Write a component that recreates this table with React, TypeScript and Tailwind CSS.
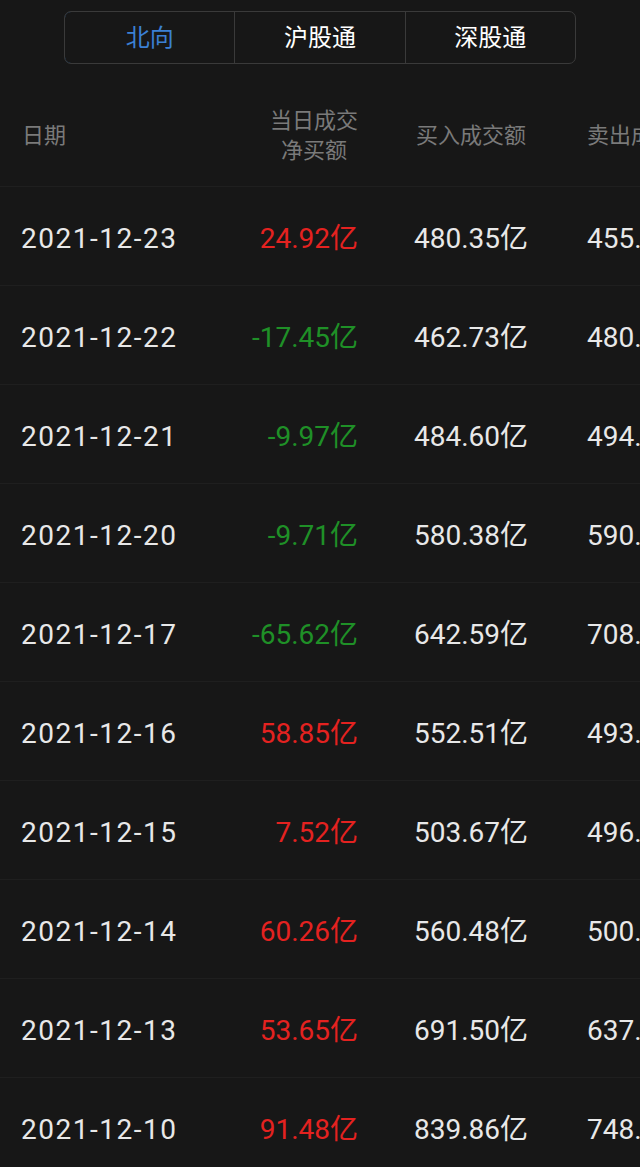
import React from "react";

const rows = [
  { date: "2021-12-23", net: "24.92亿", up: true, buy: "480.35亿", sell: "455.43亿" },
  { date: "2021-12-22", net: "-17.45亿", up: false, buy: "462.73亿", sell: "480.18亿" },
  { date: "2021-12-21", net: "-9.97亿", up: false, buy: "484.60亿", sell: "494.57亿" },
  { date: "2021-12-20", net: "-9.71亿", up: false, buy: "580.38亿", sell: "590.09亿" },
  { date: "2021-12-17", net: "-65.62亿", up: false, buy: "642.59亿", sell: "708.21亿" },
  { date: "2021-12-16", net: "58.85亿", up: true, buy: "552.51亿", sell: "493.66亿" },
  { date: "2021-12-15", net: "7.52亿", up: true, buy: "503.67亿", sell: "496.15亿" },
  { date: "2021-12-14", net: "60.26亿", up: true, buy: "560.48亿", sell: "500.22亿" },
  { date: "2021-12-13", net: "53.65亿", up: true, buy: "691.50亿", sell: "637.85亿" },
  { date: "2021-12-10", net: "91.48亿", up: true, buy: "839.86亿", sell: "748.38亿" },
];

const font = { fontFamily: "Roboto, 'Noto Sans CJK SC', sans-serif" };

export default function App() {
  return (
    <div
      className="w-[640px] h-[1167px] overflow-hidden bg-[#171717] text-[#e8e8e8]"
      style={font}
    >
      {/* Tabs */}
      <div className="pt-[11px] px-[64px]">
        <div className="flex h-[53px] rounded-[7px] border border-[#3a3a3a] overflow-hidden text-[24px]">
          <div className="flex-1 flex items-center justify-center border border-[#2b5c96] rounded-l-[7px] -m-px text-[#3b80d4]">
            北向
          </div>
          <div className="flex-1 flex items-center justify-center border-l border-[#3a3a3a] text-white">
            沪股通
          </div>
          <div className="flex-1 flex items-center justify-center border-l border-[#3a3a3a] text-white">
            深股通
          </div>
        </div>
      </div>

      {/* Table */}
      <div className="mt-[22px] w-[800px]">
        {/* Header */}
        <div className="flex items-center h-[101px] pl-[22px] border-b border-[#1f1f1f] text-[22px] text-[#7a7a7a] leading-[30px]">
          <div className="w-[170px]">日期</div>
          <div className="w-[166px] flex justify-end">
            <div className="text-center">
              <div>当日成交</div>
              <div>净买额</div>
            </div>
          </div>
          <div className="ml-[58px] w-[112px] whitespace-nowrap">买入成交额</div>
          <div className="ml-[59px] whitespace-nowrap">卖出成交额</div>
        </div>

        {/* Rows */}
        {rows.map((r) => (
          <div
            key={r.date}
            className="flex items-center h-[99px] pl-[21px] pt-[5px] border-b border-[#1f1f1f] text-[28px] whitespace-nowrap"
          >
            <div className="w-[171px] tracking-[1.5px]">{r.date}</div>
            <div
              className={`w-[166px] text-right ${
                r.up ? "text-[#e42220]" : "text-[#1f9027]"
              }`}
            >
              {r.net}
            </div>
            <div className="ml-[58px] w-[112px] flex justify-end">{r.buy}</div>
            <div className="ml-[59px]">{r.sell}</div>
          </div>
        ))}
      </div>
    </div>
  );
}
